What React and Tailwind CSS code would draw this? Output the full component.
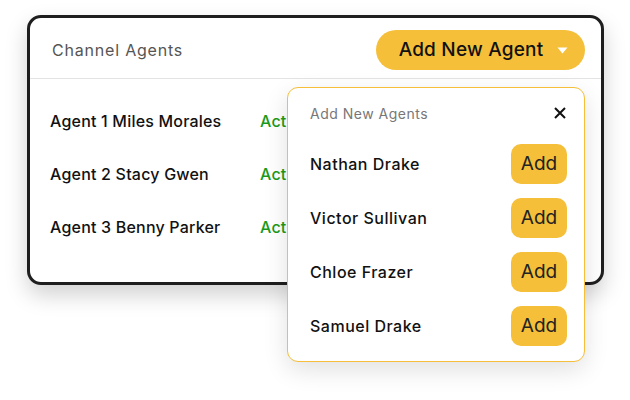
export default function App() {
  const agents = ["Agent 1 Miles Morales", "Agent 2 Stacy Gwen", "Agent 3 Benny Parker"];
  const candidates = ["Nathan Drake", "Victor Sullivan", "Chloe Frazer", "Samuel Drake"];
  return (
    <div className="w-[630px] h-[400px] bg-white pt-[15px] pl-[27px]" style={{ fontFamily: "Inter, 'Noto Sans', sans-serif" }}>
      <div className="relative w-[577px] h-[270px] rounded-[14px] border-[3px] border-[#1e1e1e] bg-white shadow-[0_10px_22px_rgba(0,0,0,0.18)]">
        <div className="h-[61px] flex items-center justify-between pl-[22px] pr-[16px] pt-[4px] border-b border-[#e4e4e4]">
          <span className="text-[16px] tracking-[0.8px] text-[#555]">Channel Agents</span>
          <button className="w-[209px] h-[40px] rounded-full bg-[#f5bf3a] flex items-center justify-center gap-[14px] pl-[6px]">
            <span className="text-[19px] tracking-[0.2px] text-[#111] font-medium">Add New Agent</span>
            <svg width="11" height="7" viewBox="0 0 11 7"><path d="M0.5 0.5 L10.5 0.5 L5.5 6.5 Z" fill="#fff" /></svg>
          </button>
        </div>
        <div className="pt-[15px] flex flex-col">
          {agents.map((a) => (
            <div key={a} className="h-[53px] flex items-center pl-[20px]">
              <span className="w-[210px] text-[16px] tracking-[0.2px] text-[#111] font-medium">{a}</span>
              <span className="text-[16px] tracking-[0.2px] text-[#1a9a1a] font-medium">Active</span>
            </div>
          ))}
        </div>
        <div className="absolute left-[257px] top-[69px] w-[298px] h-[275px] rounded-[11px] border border-[#f5bf3a] bg-white shadow-[0_8px_24px_rgba(0,0,0,0.12)] pl-[22px] pr-[17px]">
          <div className="h-[49px] flex items-center justify-between pt-[1px]">
            <span className="text-[14px] tracking-[0.5px] text-[#777]">Add New Agents</span>
            <svg width="12" height="12" viewBox="0 0 12 12" className="mr-[1px]"><path d="M1 1 L11 11 M11 1 L1 11" stroke="#111" strokeWidth="2" /></svg>
          </div>
          <div className="flex flex-col">
            {candidates.map((c) => (
              <div key={c} className="h-[54px] flex items-center justify-between">
                <span className="text-[16px] tracking-[0.5px] text-[#111] font-medium">{c}</span>
                <button className="w-[56px] h-[40px] rounded-[10px] bg-[#f5bf3a] text-[19px] text-[#222]">Add</button>
              </div>
            ))}
          </div>
        </div>
      </div>
    </div>
  );
}
